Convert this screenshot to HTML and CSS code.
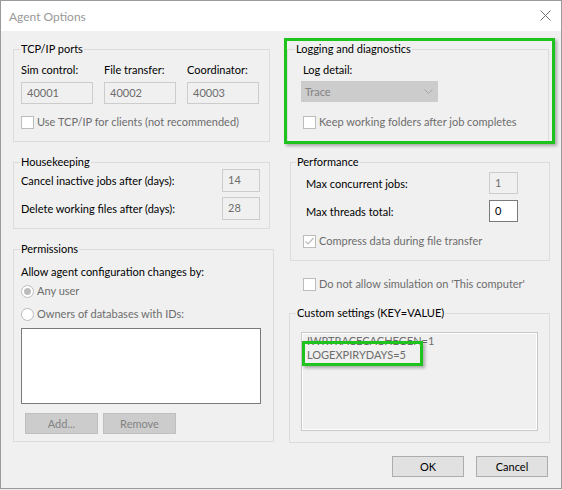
FILE: index.html
```html
<!DOCTYPE html>
<html lang="en">
  <head>
    <meta charset="UTF-8" />
    <title>Agent Options</title>
    <link rel="stylesheet" href="styles.css">
  </head>
  <body>
    <div class="window">
      <div class="titlebar">
        <span class="title">Agent Options</span>
        <svg class="close" width="11" height="11" viewBox="0 0 11 11">
          <path d="M0.5 0.5 L10.5 10.5 M10.5 0.5 L0.5 10.5" stroke="#707070" stroke-width="1" fill="none" />
        </svg>
      </div>

      <div class="content">
        <!-- left column -->
        <div class="col">
          <div class="group tcp">
            <div class="group-title">TCP/IP ports</div>
            <div class="ports">
              <span>Sim control:</span>
              <span>File transfer:</span>
              <span>Coordinator:</span>
              <div class="field disabled">40001</div>
              <div class="field disabled">40002</div>
              <div class="field disabled">40003</div>
            </div>
            <div class="check disabled tcp-check"><span class="box"></span>Use TCP/IP for clients (not recommended)</div>
          </div>

          <div class="group housekeeping">
            <div class="group-title">Housekeeping</div>
            <div class="row">
              <span>Cancel inactive jobs after (days):</span>
              <div class="field disabled days">14</div>
            </div>
            <div class="row second">
              <span>Delete working files after (days):</span>
              <div class="field disabled days">28</div>
            </div>
          </div>

          <div class="group permissions">
            <div class="group-title">Permissions</div>
            <div class="allow">Allow agent configuration changes by:</div>
            <div class="radio disabled first"><span class="dot on"></span>Any user</div>
            <div class="radio disabled"><span class="dot"></span>Owners of databases with IDs:</div>
            <div class="listbox"></div>
            <div class="buttons-left">
              <button class="btn disabled">Add...</button>
              <button class="btn disabled">Remove</button>
            </div>
          </div>
        </div>

        <!-- right column -->
        <div class="col">
          <div class="group logging">
            <div class="group-title">Logging and diagnostics</div>
            <div class="log-label">Log detail:</div>
            <div class="select">
              <span>Trace</span>
              <svg width="9" height="5" viewBox="0 0 9 5">
                <path d="M0.5 0.5 L4.5 4.5 L8.5 0.5" stroke="#a6a6a6" fill="none" />
              </svg>
            </div>
            <div class="check disabled log-check"><span class="box"></span>Keep working folders after job completes</div>
            <div class="highlight big"></div>
          </div>

          <div class="group performance">
            <div class="group-title">Performance</div>
            <div class="perf-row first">
              <span>Max concurrent jobs:</span>
              <div class="field disabled small">1</div>
            </div>
            <div class="perf-row">
              <span>Max threads total:</span>
              <div class="field active small">0</div>
            </div>
            <div class="check disabled perf-check">
              <span class="box">
                <svg width="11" height="11" viewBox="0 0 11 11">
                  <path d="M1.5 5.5 L4 8 L9.5 2" stroke="#bcbcbc" stroke-width="1.2" fill="none" />
                </svg>
              </span>Compress data during file transfer
            </div>
          </div>

          <div class="check disabled sim-check"><span class="box"></span>Do not allow simulation on 'This computer'</div>

          <div class="group custom">
            <div class="group-title">Custom settings (KEY=VALUE)</div>
            <div class="textarea">
              <div>IWRTRACECACHEGEN=1</div>
              <div>LOGEXPIRYDAYS=5</div>
              <div class="highlight small"></div>
            </div>
          </div>

          <div class="buttons">
            <button class="btn">OK</button>
            <button class="btn">Cancel</button>
          </div>
        </div>
      </div>
    </div>
  </body>
</html>
```

FILE: styles.css
```css
* {
  box-sizing: border-box;
}
body {
  margin: 0;
  background: #e8e8e8;
  font-family: "Lato", "Liberation Sans", sans-serif;
  font-size: 11px;
  color: #000;
  white-space: nowrap;
}
.window {
  width: 562px;
  height: 489px;
  border: 1px solid #9a9a9a;
  background: #f0f0f0;
}
.titlebar {
  height: 30px;
  background: #fff;
  display: flex;
  align-items: center;
  justify-content: space-between;
  padding: 0 10px 0 8px;
}
.title {
  color: #999;
  font-size: 12px;
}
.close {
  display: block;
  margin-top: -1px;
}
.content {
  display: grid;
  grid-template-columns: 261px 263px;
  column-gap: 13px;
  padding: 18px 0 0 12px;
}
.col {
  display: flex;
  flex-direction: column;
  align-items: flex-start;
}

/* group boxes */
.group {
  position: relative;
  border: 1px solid #dcdcdc;
  padding-left: 7px;
}
.group-title {
  width: max-content;
  height: 14px;
  line-height: 14px;
  margin: -8px 0 0 -1px;
  padding: 0 1px;
  background: #f0f0f0;
}
.disabled {
  color: #6d6d6d;
}

/* text fields */
.field {
  height: 22px;
  line-height: 20px;
  padding-left: 5px;
  border: 1px solid #cccccc;
  background: #f0f0f0;
}
.field.active {
  background: #fff;
  border-color: #7a7a7a;
  color: #000;
}

/* checkbox / radio */
.check,
.radio {
  display: flex;
  align-items: center;
  height: 14px;
  line-height: 14px;
}
.box {
  width: 13px;
  height: 13px;
  border: 1px solid #bcbcbc;
  background: #fff;
  margin-right: 3px;
  display: flex;
  align-items: center;
  justify-content: center;
}
.dot {
  width: 13px;
  height: 13px;
  border: 1px solid #bcbcbc;
  border-radius: 50%;
  background: #fff;
  margin-right: 3px;
  display: flex;
  align-items: center;
  justify-content: center;
}
.dot.on::after {
  content: "";
  width: 7px;
  height: 7px;
  border-radius: 50%;
  background: #bcbcbc;
}

/* buttons */
.btn {
  height: 21px;
  width: 72px;
  border: 1px solid #adadad;
  background: #e1e1e1;
  font-family: inherit;
  font-size: 11px;
  color: #000;
  padding: 0;
}
.btn.disabled {
  width: 73px;
  background: #cccccc;
  border-color: #bfbfbf;
  color: #838383;
}

/* TCP/IP */
.tcp {
  width: 257px;
  padding-bottom: 12px;
}
.ports {
  display: grid;
  grid-template-columns: 72px 72px 72px;
  column-gap: 11px;
  row-gap: 5px;
  margin-top: 7px;
  line-height: 14px;
}
.tcp-check {
  margin-top: 11px;
}

/* housekeeping */
.housekeeping {
  width: 257px;
  margin-top: 20px;
  padding-right: 9px;
  padding-bottom: 8px;
}
.row {
  display: flex;
  align-items: center;
  justify-content: space-between;
  height: 23px;
}
.row.second {
  margin-top: 5px;
}
.field.days {
  width: 38px;
  height: 23px;
}

/* permissions */
.permissions {
  width: 261px;
  margin-top: 20px;
  padding-bottom: 7px;
}
.allow {
  margin-top: 9px;
  line-height: 14px;
}
.radio {
  margin-top: 9px;
}
.radio.first {
  margin-top: 5px;
}
.listbox {
  margin-top: 7px;
  width: 240px;
  height: 76px;
  border: 1px solid #7a7a7a;
  background: #fff;
}
.buttons-left {
  display: flex;
  gap: 5px;
  margin: 9px 0 0 4px;
}

/* logging */
.logging {
  width: 262px;
  padding-left: 15px;
  padding-bottom: 12px;
}
.logging .group-title {
  margin-left: -8px;
}
.log-label {
  margin-top: 7px;
  line-height: 14px;
}
.select {
  margin-top: 4px;
  width: 137px;
  height: 21px;
  margin-left: -2px;
  background: #cccccc;
  border: 1px solid #cccccc;
  color: #838383;
  display: flex;
  align-items: center;
  justify-content: space-between;
  padding: 0 4px 0 3px;
}
.select svg {
  display: block;
}
.log-check {
  margin-top: 13px;
}
.highlight {
  position: absolute;
  border: 3px solid #1ec31e;
  box-shadow: 2px 2px 3px rgba(0, 0, 0, 0.3);
}
.highlight.big {
  left: -4px;
  top: -12px;
  width: 271px;
  height: 106px;
}
.highlight.small {
  left: 0;
  top: 8px;
  width: 121px;
  height: 25px;
}

/* performance */
.performance {
  width: 260px;
  margin: 20px 0 0 3px;
  padding-left: 15px;
  padding-bottom: 12px;
}
.performance .group-title {
  margin-left: -10px;
}
.perf-row {
  display: grid;
  grid-template-columns: 183px 29px;
  align-items: center;
  height: 22px;
  margin-top: 6px;
}
.perf-row.first {
  margin-top: 3px;
}
.field.small {
  width: 29px;
}
.perf-check {
  margin: 12px 0 0 -3px;
}
.sim-check {
  margin: 16px 0 0 16px;
}

/* custom settings */
.custom {
  width: 261px;
  margin: 22px 0 0 2px;
  padding-left: 11px;
  padding-bottom: 11px;
}
.custom .group-title {
  margin-left: -5px;
}
.textarea {
  position: relative;
  margin-top: 12px;
  width: 237px;
  height: 99px;
  border: 1px solid #c8c8c8;
  box-shadow: inset 1px 1px 0 #fff, inset -1px -1px 0 #fff;
  padding: 1px 0 0 5px;
  line-height: 14px;
  color: #6d6d6d;
}

.buttons {
  align-self: stretch;
  display: flex;
  justify-content: flex-end;
  gap: 12px;
  margin-top: 13px;
  padding-right: 2px;
}
```
